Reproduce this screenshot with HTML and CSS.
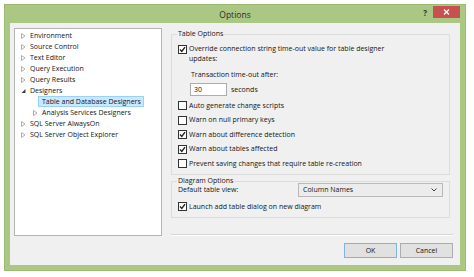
FILE: index.html
```html
<!DOCTYPE html>
<html>
<head>
<meta charset="utf-8">
<link rel="stylesheet" href="styles.css">
</head>
<body>
<div class="window">
  <div class="titlebar">
    <span class="title">Options</span>
    <div class="controls">
      <span class="help">?</span>
      <span class="close"><svg width="7" height="6" viewBox="0 0 7 6"><path d="M1 0.5 L6 5.5 M6 0.5 L1 5.5" stroke="#fff" stroke-width="1.3"/></svg></span>
    </div>
  </div>
  <div class="client">
    <div class="main">
      <div class="tree">
        <div class="node"><span class="arr"><svg width="5" height="6" viewBox="0 0 5 6"><path d="M0.5 0.5 L4 3 L0.5 5.5 Z" fill="none" stroke="#a6a6a6" stroke-width="0.9"/></svg></span>Environment</div>
        <div class="node"><span class="arr"><svg width="5" height="6" viewBox="0 0 5 6"><path d="M0.5 0.5 L4 3 L0.5 5.5 Z" fill="none" stroke="#a6a6a6" stroke-width="0.9"/></svg></span>Source Control</div>
        <div class="node"><span class="arr"><svg width="5" height="6" viewBox="0 0 5 6"><path d="M0.5 0.5 L4 3 L0.5 5.5 Z" fill="none" stroke="#a6a6a6" stroke-width="0.9"/></svg></span>Text Editor</div>
        <div class="node"><span class="arr"><svg width="5" height="6" viewBox="0 0 5 6"><path d="M0.5 0.5 L4 3 L0.5 5.5 Z" fill="none" stroke="#a6a6a6" stroke-width="0.9"/></svg></span>Query Execution</div>
        <div class="node"><span class="arr"><svg width="5" height="6" viewBox="0 0 5 6"><path d="M0.5 0.5 L4 3 L0.5 5.5 Z" fill="none" stroke="#a6a6a6" stroke-width="0.9"/></svg></span>Query Results</div>
        <div class="node"><span class="arr"><svg width="5" height="6" viewBox="0 0 5 6"><path d="M4.5 1 L4.5 5 L0.5 5 Z" fill="#404040"/></svg></span>Designers</div>
        <div class="node child"><span class="sel">Table and Database Designers</span></div>
        <div class="node child"><span class="arr"><svg width="5" height="6" viewBox="0 0 5 6"><path d="M0.5 0.5 L4 3 L0.5 5.5 Z" fill="none" stroke="#a6a6a6" stroke-width="0.9"/></svg></span>Analysis Services Designers</div>
        <div class="node"><span class="arr"><svg width="5" height="6" viewBox="0 0 5 6"><path d="M0.5 0.5 L4 3 L0.5 5.5 Z" fill="none" stroke="#a6a6a6" stroke-width="0.9"/></svg></span>SQL Server AlwaysOn</div>
        <div class="node"><span class="arr"><svg width="5" height="6" viewBox="0 0 5 6"><path d="M0.5 0.5 L4 3 L0.5 5.5 Z" fill="none" stroke="#a6a6a6" stroke-width="0.9"/></svg></span>SQL Server Object Explorer</div>
      </div>
      <div class="pane">
        <div class="group table-opts">
          <div class="legend">Table Options</div>
          <div class="row first"><span class="cb on"><svg width="7" height="7" viewBox="0 0 7 7"><path d="M1 3.6 L2.8 5.4 L6 1.2" fill="none" stroke="#222" stroke-width="1.4"/></svg></span><span class="lbl">Override connection string time-out value for table designer<br>updates:</span></div>
          <div class="sub">Transaction time-out after:</div>
          <div class="timeout"><span class="input">30</span><span>seconds</span></div>
          <div class="row"><span class="cb"></span><span class="lbl">Auto generate change scripts</span></div>
          <div class="row"><span class="cb"></span><span class="lbl">Warn on null primary keys</span></div>
          <div class="row"><span class="cb on"><svg width="7" height="7" viewBox="0 0 7 7"><path d="M1 3.6 L2.8 5.4 L6 1.2" fill="none" stroke="#222" stroke-width="1.4"/></svg></span><span class="lbl">Warn about difference detection</span></div>
          <div class="row"><span class="cb on"><svg width="7" height="7" viewBox="0 0 7 7"><path d="M1 3.6 L2.8 5.4 L6 1.2" fill="none" stroke="#222" stroke-width="1.4"/></svg></span><span class="lbl">Warn about tables affected</span></div>
          <div class="row"><span class="cb"></span><span class="lbl">Prevent saving changes that require table re-creation</span></div>
        </div>
        <div class="group diagram">
          <div class="legend dlegend">Diagram Options</div>
          <div class="view-row"><span>Default table view:</span><span class="combo"><span>Column Names</span><svg width="6" height="4" viewBox="0 0 6 4"><path d="M0.5 0.5 L3 3 L5.5 0.5" fill="none" stroke="#444" stroke-width="1"/></svg></span></div>
          <div class="row"><span class="cb on"><svg width="7" height="7" viewBox="0 0 7 7"><path d="M1 3.6 L2.8 5.4 L6 1.2" fill="none" stroke="#222" stroke-width="1.4"/></svg></span><span class="lbl">Launch add table dialog on new diagram</span></div>
        </div>
        <div class="sep"></div>
      </div>
    </div>
    <div class="footer">
      <span class="btn default">OK</span>
      <span class="btn">Cancel</span>
    </div>
  </div>
</div>
</body>
</html>
```
FILE: styles.css
```css
* { box-sizing: border-box; }
body {
  margin: 0;
  background: #fff;
  font-family: "Open Sans", "Noto Sans", sans-serif;
  font-size: 7px;
  color: #141414;
}
.window {
  margin: 4px 0 0 4px;
  width: 462px;
  height: 267px;
  background: #abc784;
  border: 1px solid #9dba73;
  padding: 0 5px 5px 5px;
  display: flex;
  flex-direction: column;
}
.titlebar {
  height: 18px;
  flex: none;
  display: grid;
  grid-template-columns: 1fr auto 1fr;
}
.title {
  grid-column: 2;
  font-size: 8.5px;
  line-height: 20px;
  color: #2a2a2a;
}
.controls {
  grid-column: 3;
  justify-self: end;
  display: flex;
  align-items: flex-start;
}
.help {
  font-weight: bold;
  font-size: 8px;
  line-height: 10px;
  margin: 3px 6px 0 0;
  color: #333;
}
.close {
  width: 27px;
  height: 12px;
  margin-top: 1px;
  background: #c75050;
  display: flex;
  align-items: center;
  justify-content: center;
}
.client {
  flex: 1;
  background: #f0f0f0;
  padding: 5px 7px 0 4px;
  display: flex;
  flex-direction: column;
}
.main {
  display: flex;
  height: 208px;
  gap: 9px;
}
.tree {
  width: 148px;
  flex: none;
  background: #fff;
  border: 1px solid #b4b4b4;
  padding: 1px 0 0 6px;
}
.node {
  height: 11px;
  line-height: 11px;
  display: flex;
  align-items: center;
  white-space: nowrap;
}
.node.child { padding-left: 12px; }
.arr {
  width: 9px;
  flex: none;
  display: flex;
  align-items: center;
}
.sel {
  margin-left: 5px;
  height: 11px;
  padding: 0 2px 0 3px;
  background: #cce8ff;
  border: 1px solid #99d1ff;
  line-height: 9px;
}
.pane {
  flex: 1;
  display: flex;
  flex-direction: column;
}
.group {
  border: 1px solid #dcdcdc;
  margin-right: 3px;
  padding: 0 5px 5px 6px;
}
.table-opts { margin-top: 6px; }
.legend {
  width: fit-content;
  margin: -6px 0 0 -1px;
  padding: 0 1px;
  background: #f0f0f0;
  line-height: 10px;
}
.row {
  display: flex;
  align-items: flex-start;
  line-height: 10px;
  margin-top: 4.5px;
}
.row.first { margin-top: 5px; }
.cb {
  width: 9px;
  height: 9px;
  flex: none;
  margin: 0.5px 2px 0 0;
  border: 1px solid #333;
  background: #fff;
  display: flex;
  align-items: center;
  justify-content: center;
}
.sub {
  margin: 6px 0 0 13px;
  line-height: 10px;
}
.timeout {
  margin: 3px 0 0 12px;
  display: flex;
  align-items: center;
  gap: 4px;
}
.input {
  width: 37px;
  height: 13px;
  border: 1px solid #abadb3;
  background: #fff;
  padding-left: 3px;
  line-height: 11px;
}
.diagram { margin-top: 6px; }
.dlegend { margin-bottom: -3px; }
.view-row {
  display: flex;
  align-items: center;
  justify-content: space-between;
  height: 14px;
}
.combo {
  width: 145px;
  height: 14px;
  border: 1px solid #b9b9b9;
  background: #ececec;
  display: flex;
  align-items: center;
  justify-content: space-between;
  padding: 0 5px 0 4px;
  margin-right: 1px;
}
.diagram .row { margin-top: 5px; }
.sep {
  margin-top: auto;
  height: 2px;
  border-top: 1px solid #d5d5d5;
  border-bottom: 1px solid #fff;
}
.footer {
  margin-top: 7px;
  display: flex;
  justify-content: flex-end;
  gap: 3px;
}
.btn {
  width: 53px;
  height: 15px;
  background: #e1e1e1;
  border: 1px solid #adadad;
  display: flex;
  align-items: center;
  justify-content: center;
}
.btn.default { border-color: #7fb2e5; }
```
